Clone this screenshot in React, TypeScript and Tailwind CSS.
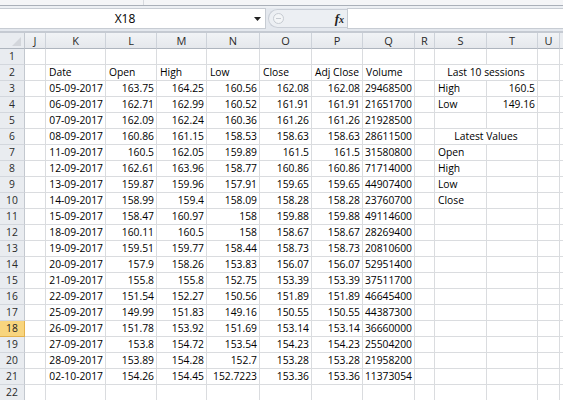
import React from "react";

type Cell = { v: string; a?: "l" | "r" | "c" };

const data: string[][] = [
  ["05-09-2017", "163.75", "164.25", "160.56", "162.08", "162.08", "29468500"],
  ["06-09-2017", "162.71", "162.99", "160.52", "161.91", "161.91", "21651700"],
  ["07-09-2017", "162.09", "162.24", "160.36", "161.26", "161.26", "21928500"],
  ["08-09-2017", "160.86", "161.15", "158.53", "158.63", "158.63", "28611500"],
  ["11-09-2017", "160.5", "162.05", "159.89", "161.5", "161.5", "31580800"],
  ["12-09-2017", "162.61", "163.96", "158.77", "160.86", "160.86", "71714000"],
  ["13-09-2017", "159.87", "159.96", "157.91", "159.65", "159.65", "44907400"],
  ["14-09-2017", "158.99", "159.4", "158.09", "158.28", "158.28", "23760700"],
  ["15-09-2017", "158.47", "160.97", "158", "159.88", "159.88", "49114600"],
  ["18-09-2017", "160.11", "160.5", "158", "158.67", "158.67", "28269400"],
  ["19-09-2017", "159.51", "159.77", "158.44", "158.73", "158.73", "20810600"],
  ["20-09-2017", "157.9", "158.26", "153.83", "156.07", "156.07", "52951400"],
  ["21-09-2017", "155.8", "155.8", "152.75", "153.39", "153.39", "37511700"],
  ["22-09-2017", "151.54", "152.27", "150.56", "151.89", "151.89", "46645400"],
  ["25-09-2017", "149.99", "151.83", "149.16", "150.55", "150.55", "44387300"],
  ["26-09-2017", "151.78", "153.92", "151.69", "153.14", "153.14", "36660000"],
  ["27-09-2017", "153.8", "154.72", "153.54", "154.23", "154.23", "25504200"],
  ["28-09-2017", "153.89", "154.28", "152.7", "153.28", "153.28", "21958200"],
  ["02-10-2017", "154.26", "154.45", "152.7223", "153.36", "153.36", "11373054"],
];

const side: Record<number, [Cell, Cell] | Cell | null> = {
  2: { v: "Last 10 sessions", a: "c" },
  3: [{ v: "High" }, { v: "160.5", a: "r" }],
  4: [{ v: "Low" }, { v: "149.16", a: "r" }],
  6: { v: "Latest Values", a: "c" },
  7: [{ v: "Open" }, { v: "" }],
  8: [{ v: "High" }, { v: "" }],
  9: [{ v: "Low" }, { v: "" }],
  10: [{ v: "Close" }, { v: "" }],
};

const letters = ["J", "K", "L", "M", "N", "O", "P", "Q", "R", "S", "T", "U"];

function C({ c, span }: { c?: Cell; span?: boolean }) {
  const a = c?.a ?? "l";
  return (
    <div
      className={
        "h-[16px] border-r border-b border-[#dadcdf] leading-[15px] whitespace-nowrap overflow-hidden " +
        (span ? "col-span-2 " : "") +
        (a === "r" ? "text-right pr-[2px]" : a === "c" ? "text-center" : "text-left pl-[3px]")
      }
    >
      {c?.v ?? ""}
    </div>
  );
}

function RowHead({ n }: { n: number }) {
  const sel = n === 18;
  return (
    <div
      className={
        "h-[16px] border-r border-b leading-[15px] text-center " +
        (sel
          ? "bg-[#f8d57e] border-[#e3b14c] text-[#222]"
          : "bg-[#e9ecf0] border-r-[#c3c8cf] border-b-[#d3d7dd] text-[#2a2a2a]")
      }
    >
      {n}
    </div>
  );
}

export default function App() {
  const rows: React.ReactNode[] = [];
  for (let n = 1; n <= 22; n++) {
    const cells: React.ReactNode[] = [];
    cells.push(<RowHead key="h" n={n} />);
    cells.push(<C key="J" />);
    if (n === 2) {
      ["Date", "Open", "High", "Low", "Close", "Adj Close", "Volume"].forEach((t, i) =>
        cells.push(<C key={"d" + i} c={{ v: t }} />)
      );
    } else if (n >= 3 && n <= 21) {
      data[n - 3].forEach((t, i) => cells.push(<C key={"d" + i} c={{ v: t, a: "r" }} />));
    } else {
      for (let i = 0; i < 7; i++) cells.push(<C key={"d" + i} />);
    }
    cells.push(<C key="R" />);
    const s = side[n];
    if (s && !Array.isArray(s)) {
      cells.push(<C key="ST" c={s} span />);
    } else if (Array.isArray(s)) {
      cells.push(<C key="S" c={s[0]} />);
      cells.push(<C key="T" c={s[1]} />);
    } else {
      cells.push(<C key="S" />);
      cells.push(<C key="T" />);
    }
    cells.push(<C key="U" />);
    cells.push(<div key="f" className="h-[16px] border-b border-[#dadcdf] bg-white" />);
    rows.push(...cells.map((c, i) => <React.Fragment key={n + "-" + i}>{c}</React.Fragment>));
  }

  return (
    <div
      className="w-[563px] h-[400px] overflow-hidden bg-white text-[10.3px] text-black"
      style={{ fontFamily: '"Open Sans", "Liberation Sans", sans-serif' }}
    >
      {/* top strip */}
      <div className="h-[5px] bg-[#f4f5f7] flex">
        <div className="w-[143px]" />
        <div className="w-px bg-[#d6d9de]" />
      </div>
      <div className="h-px bg-[#aab0b9]" />
      <div className="h-[27px] bg-[#e4e8ee] flex flex-col">
        <div className="h-[2px] bg-[#edf0f4]" />
        <div className="h-[21px] flex">
          <div className="w-[266px] bg-white border-y border-r border-[#c7ccd3] flex items-center relative">
            <div className="w-[250px] text-center text-[12px] text-black">X18</div>
            <svg width="8" height="5" viewBox="0 0 8 5" className="absolute left-[254px] top-[8px]">
              <path d="M0 0 H7 L3.5 4 Z" fill="#222" />
            </svg>
          </div>
          <div className="w-[81px] flex items-center pl-[2px]">
            <div className="h-[19px] flex-1 rounded-l-full bg-[#eceff3] border-y border-l border-[#c9ced6] flex items-center">
              <div className="ml-[4px] w-[11px] h-[11px] rounded-full border border-[#c6cbd2] bg-[#f3f5f7] flex items-center justify-center">
                <div className="w-[5px] h-px bg-[#c6cbd2]" />
              </div>
              <div className="flex-1" />
              <span
                className="italic font-bold text-[13px] text-[#222] mr-[3px] leading-none"
                style={{ fontFamily: '"Liberation Serif", serif' }}
              >
                f<span className="text-[10px]">x</span>
              </span>
            </div>
          </div>
          <div className="flex-1 bg-white border-y border-l border-[#c7ccd3]" />
        </div>
        <div className="h-[2px] bg-[#e4e8ee]" />
        <div className="h-[2px] bg-[#c5cad2]" />
      </div>
      {/* grid */}
      <div className="grid grid-cols-[25px_21px_60px_51px_50px_53px_52px_51px_52px_20px_52px_51px_22px_1fr]">
        <div className="h-[16px] bg-[#e9ecf0] border-r border-b border-r-[#c3c8cf] border-b-[#aeb5be] relative">
          <svg width="9" height="9" viewBox="0 0 9 9" className="absolute right-[3px] bottom-[2px]">
            <path d="M9 0 V9 H0 Z" fill="#d3d6db" />
          </svg>
        </div>
        {letters.map((l) => (
          <div
            key={l}
            className="h-[16px] bg-gradient-to-b from-[#f1f3f6] to-[#e5e8ec] border-r border-b border-r-[#cdd2d9] border-b-[#aeb5be] text-center leading-[15px] text-[11px] text-[#2a2a2a]"
          >
            {l}
          </div>
        ))}
        <div className="h-[16px] bg-[#e9ecf0] border-b border-b-[#aeb5be]" />
        {rows}
      </div>
    </div>
  );
}
